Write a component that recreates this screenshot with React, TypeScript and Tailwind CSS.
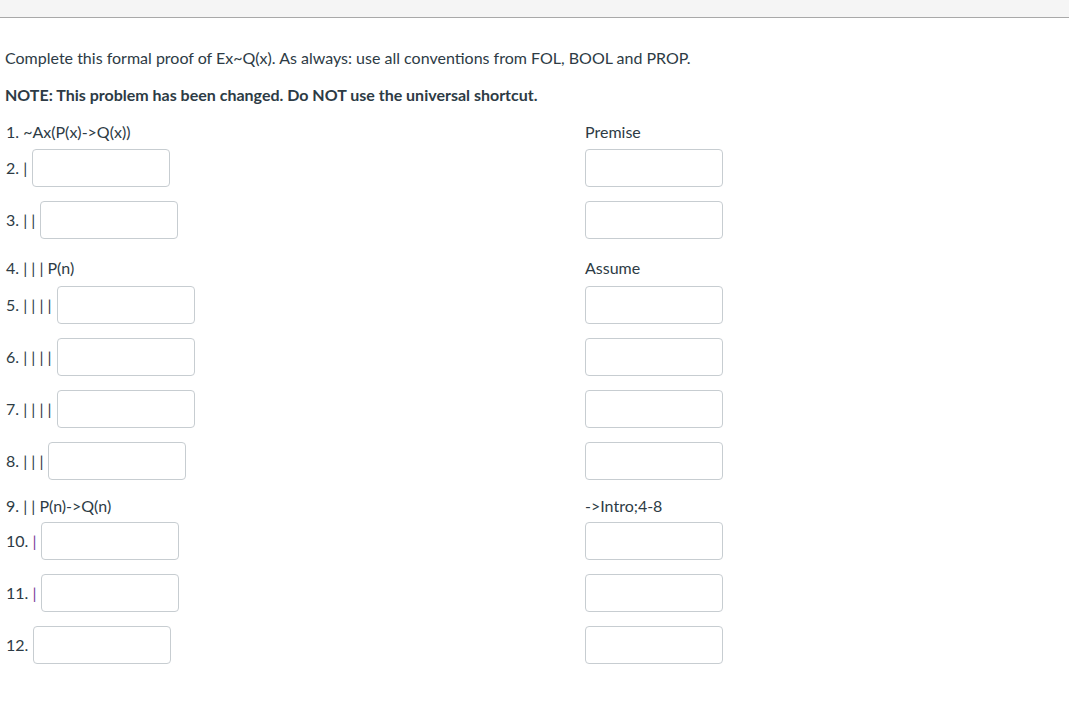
import React from 'react';

type Row = {
  label: string;
  bars: number;
  text?: string;
  reason?: string;
  mt: string;
  purple?: boolean;
};

const rows: Row[] = [
  { label: '1.', bars: 0, text: '~Ax(P(x)->Q(x))', reason: 'Premise', mt: 'mt-[17px]' },
  { label: '2.', bars: 1, mt: 'mt-[7px]' },
  { label: '3.', bars: 2, mt: 'mt-[14px]' },
  { label: '4.', bars: 3, text: 'P(n)', reason: 'Assume', mt: 'mt-[19px]' },
  { label: '5.', bars: 4, mt: 'mt-[8px]' },
  { label: '6.', bars: 4, mt: 'mt-[14px]' },
  { label: '7.', bars: 4, mt: 'mt-[14px]' },
  { label: '8.', bars: 3, mt: 'mt-[14px]' },
  { label: '9.', bars: 2, text: 'P(n)->Q(n)', reason: '->Intro;4-8', mt: 'mt-[16px]' },
  { label: '10.', bars: 1, mt: 'mt-[6px]', purple: true },
  { label: '11.', bars: 1, mt: 'mt-[14px]', purple: true },
  { label: '12.', bars: 0, mt: 'mt-[14px]' },
];

const Field: React.FC = () => (
  <input
    type="text"
    className="h-[38px] w-[138px] rounded-[4px] border border-[#c7cdd1] bg-white outline-none"
  />
);

const ProofRow: React.FC<{ row: Row }> = ({ row }) => {
  const bars = Array.from({ length: row.bars }, () => '|').join(' ');
  const isText = row.text !== undefined;
  return (
    <div className={`flex ${row.mt} ${isText ? 'h-[20px] items-center' : 'items-center'}`}>
      <div className="flex w-[579px] items-center">
        <span className="whitespace-pre">
          {row.label}
          {row.bars > 0 && ' '}
          {row.bars > 0 && (
            <span className={row.purple ? 'text-[#7b3f98]' : ''}>{bars}</span>
          )}
          {isText && ` ${row.text}`}
        </span>
        {!isText && <span className="ml-[5px]"><Field /></span>}
      </div>
      <div className="flex items-center">
        {isText ? <span>{row.reason}</span> : <Field />}
      </div>
    </div>
  );
};

export default function App() {
  return (
    <div
      className="min-h-[710px] bg-white text-[16px] leading-[20px] text-[#2d3b45]"
      style={{ fontFamily: 'Lato, "Liberation Sans", sans-serif' }}
    >
      <div className="h-[18px] border-b border-[#a9a9a9] bg-[#f5f5f5]" />
      <div className="pl-[5px]">
        <p className="mt-[30px]">
          Complete this formal proof of Ex~Q(x). As always: use all conventions from FOL, BOOL and PROP.
        </p>
        <p className="mt-[17px] font-bold">
          NOTE: This problem has been changed. Do NOT use the universal shortcut.
        </p>
        <div className="pl-px">
          {rows.map((r) => (
            <ProofRow key={r.label} row={r} />
          ))}
        </div>
      </div>
    </div>
  );
}
